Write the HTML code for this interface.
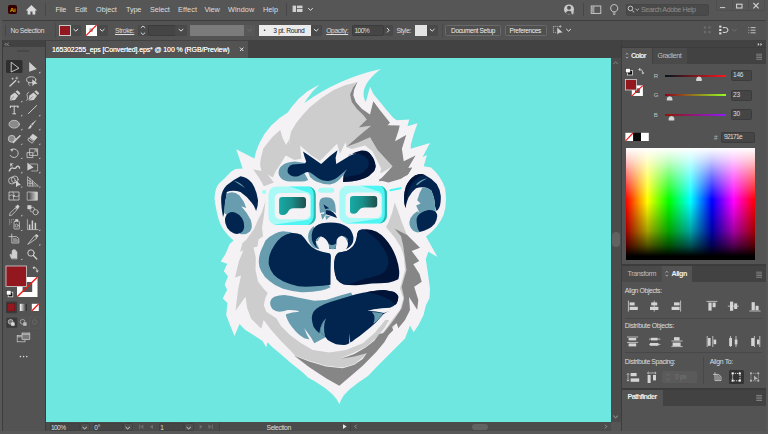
<!DOCTYPE html>
<html><head><meta charset="utf-8"><title>Illustrator</title>
<style>
*{box-sizing:border-box;margin:0;padding:0}
html,body{width:768px;height:434px;overflow:hidden;background:#585858;font-family:"Liberation Sans",sans-serif;color:#dcdcdc;font-size:7.5px}
.a{position:absolute}
.t{position:absolute;white-space:nowrap;line-height:10px;height:10px;color:#dedede;font-size:7.5px}
.b{font-weight:bold}
.u{text-decoration:underline}
.f{position:absolute;background:#454545;border:1px solid #3b3b3b;border-radius:1.5px}
.dim{color:#8c8c8c}
#ov{position:absolute;left:0;top:0;width:768px;height:434px;pointer-events:none}
</style></head><body>
<!-- app frame -->
<div class="a" style="left:0;top:0;width:768px;height:20px;background:#565656"></div>
<div class="a" style="left:2px;top:20px;width:764px;height:411px;background:#535353"></div>
<!-- menubar separator -->
<div class="a" style="left:2px;top:19.5px;width:764px;height:1.2px;background:#3d3d3d"></div>
<div class="a" style="left:2px;top:39.8px;width:764px;height:1px;background:#404040"></div>
<!-- toolbar -->
<div class="a" style="left:2px;top:40px;width:44px;height:391px;background:#3c3c3c"></div>
<div class="a" style="left:3px;top:40.3px;width:41.5px;height:390.7px;background:#535353"></div>
<div class="a" style="left:3px;top:40.3px;width:41.5px;height:7.2px;background:#424242"></div>
<div class="a" style="left:17px;top:50px;width:12px;height:2px;background:#484848"></div>
<!-- tab bar -->
<div class="a" style="left:46px;top:40.3px;width:575px;height:17.7px;background:#424242"></div>
<div class="a" style="left:46px;top:40.8px;width:201.5px;height:17.2px;background:#535353"></div>
<!-- canvas -->
<div class="a" id="canvas" style="left:46px;top:58px;width:565px;height:364px;background:#6ee7e0;overflow:hidden">
<svg class="a" style="left:-46px;top:-58px" width="768" height="434" viewBox="0 0 768 434">
<defs>
<linearGradient id="lens" x1="0" y1="0" x2="1" y2="0"><stop offset="0" stop-color="#17aaa5"/><stop offset="0.45" stop-color="#19908b"/><stop offset="1" stop-color="#1f4f4c"/></linearGradient>
</defs>
<!-- silhouette -->
<path id="sil" fill="#f4f2f5" d="M380.8,69 C370,77 358.5,90 365.8,102 L370,86.7 L373.3,93.7 L380,102 L386.7,110.3 L393.3,117.8 L396.7,120.3 L409.2,119.5 L407.5,126.2 L417.5,123.3 L413.5,135 L411,144 L410.6,148.7 L430,143.1 L422.5,156.9 L426.9,155 L423.7,166.2
 L431,167.5 Q441,176 445,188 Q447.5,204 443.5,215 Q438,228 426,236.5 L437.5,257 L428.3,251.8 L425.8,259.3 L428.3,276 L430,289.3 L429.5,298 L426,305 L423.5,315 L418.5,325 L413.7,332.3 L410,325.5 L405,338.5 L392.5,351 L380,363.5 L368,376 L358,382.7 L349.7,389.3 L343.8,395.2 L340.9,400.2 L339.5,404.3
 L336.7,399.3 L332.2,393.9 L324.7,387.7 L316.3,382.2 L308,377.6 L302.5,372.2 L290,362.2 L280,353.5 L272.5,347.2 L267.5,342.2 L266.2,347.2 L262.5,341 L255,336 L245,329.7 L239.5,324 L234.5,336 L230,325 L226.2,315 L227.5,303 L222.7,298.5 L227.2,289.7 L224.7,284.7 L228,276.3 L223.8,271.3 L227.2,263.8 L220.7,261.5 L225.5,254 L229.7,244 L233.7,240.5
 Q222,231 218.5,219 Q215,205 214.5,198 Q215,188 219,183.5 L224.7,178.2 L231.3,171.5 L235.5,169 L242.6,168.6 L239.5,158.7 L236.2,149.3 L254.4,158.6 L256,151.7 L259.3,143.3 L264.3,134.2 L271,125.8 L279.3,118.3 L287.7,112.5 L287.5,113 L291.2,107.5 L298.7,98.7 L307.5,91.2 L319.5,84.5 L313,91 L308,97.5 L304,103.3 Q337.6,78.6 380.8,69 Z"/>

<!-- light gray islands -->
<g fill="#cdcdcd">
<path d="M357.5,82 L345,85.3 L333.3,90.3 L321.7,97.8 L310,107 L302.7,115 L296,123.3 L291,131.7 L289.3,140 L290.7,147 L288.9,140 L286,145 L282.7,138.3 L280.2,130 L272.7,136.7 L266,145 L263.2,148.7 L260.7,158.7 L260.1,165 L261.4,171 L253.2,169.4 L258.9,177.5 L263.9,186.2 L273.9,182.5 L267.6,174.6 L272.8,177.5 L275.7,171.2 L280.7,163.7 L285.7,155.6 L294.5,160 L301.4,158.7 L300.1,145.6 L311.2,155.2 L320,160.9 L337,143.7 L340,154 L345.6,142 L346.5,146.8 L358.7,136 L371,125.8 L358.5,127.5 L366.7,119.5 L363.3,115.3 L356.7,108.7 L351.7,102 L350,94.5 L353.3,87 Z"/>

<path d="M345.5,147 L358,141.5 L370,136.9 L377.5,150 L392.5,166.2 L382.5,172.5 L380,173.1 L381.2,168.7 L377.5,161.2 L372.5,151.2 L365,145.6 L352,149 Z"/>
<path d="M265.5,201 L262,212 L257,222 L254,229 L246.3,239.7 L242.5,243 L240,252 L243.5,250 L239,261 L235,277.5 L241,275.5 L238,290 L235.5,310.8 L245.5,296.7 L247.2,308.3 L251.2,318.7 L261.2,328.7 L263.7,320 L271.2,330 L281.2,341.2 L290,350 L295.2,355.8 L309.3,360.8 L326,365.8 L342.7,367.5 L354.3,364.2 L362.7,357.5 L366.8,353.3 L354.3,355.8 L341,358.3 L354.3,352.5 L366,346.7 L376,338.3 L384.3,328.3 L389.3,320 L385.2,320 L382.7,323.3 L374.3,333.3 L362.7,343.3 L346,350 L329.3,352.5 L312.7,350 L300,342.5 L290,335 L281.2,326.2 L276.3,318.3 L266.3,311.7 L263.8,305 L265.5,297.5 L267.7,293 L263,288 L258,281.5 L255.5,270 L255.8,257.5 L253.5,247.6 L257.5,246.5 L258.5,239.5 L263,236.3 L262,228 L264,215 Z"/>
<path d="M394.7,202.5 L392.2,212.5 L388.5,222.5 L386,227 L394.7,237.5 L401,247.5 L404,257 L405,270 L400,288.3 L403.3,298.3 L400,310 L392,320 L385,330 L378,338 L372,343 L380,345 L392,330 L402,312 L408,298 L406,280 L408,262 L407,235 L402.9,225 L401,220 L398.5,212.5 Z"/>
<path d="M388.3,227.7 L396,238 L405,251 L410,248 L400,231 Z"/>
</g>
<!-- dark gray -->
<g fill="#868686">
<path d="M357.5,82 L353.3,87 L350,94.5 L351.7,102 L356.7,108.7 L363.3,115.3 L366.7,119.5 L358.5,127.5 L371,125.8 L358.7,136 L346.5,146.8 L358,142.5 L370,137.2 L377.5,150 L392.5,166.2 L378.7,181.2 L396.2,180 L407.5,175 L411.9,167.5 L408.1,168.1 L415.6,155.6 L403.7,161.2 L401.9,148.7 L406.2,135 L395,141.2 L398.7,130 L399.7,125.5 L387.5,125.3 L390,122.8 L380,110.3 L373.3,101.2 L370,114.5 L361.7,108.7 L355.8,102 L353.3,95.3 L354.2,89.5 Z"/>

<path d="M294.3,355.7 L309.3,367.3 L326,378.2 L339.3,385.7 L349.3,377.3 L362.7,365.7 L376,352.3 L384.3,342.3 L388.5,335 L393.3,330 L391.7,326.7 L396.7,323.3 L398.3,328.3 L405,320 L410,310 L409,297 L417.2,309.7 L418.3,300 L414.2,286.7 L421.7,281.7 L419.5,274 L413.3,264.3 L419.2,261 L411.7,251 L420,247.7 L407.2,235 L394.7,228.7 L401,236.2 L403.3,246 L405,259.3 L406.5,270 L401.7,286.7 L404.2,298.3 L401.7,308.3 L395,318.3 L390,325 L383.5,333 L379.3,334 L374.3,340.7 L366,347.3 L354.3,354 L341,358.7 L354.3,356.5 L366.8,353.2 L362.7,359 L354.3,364.8 L342.7,368.2 L326,366.5 L309.3,361.5 Z"/>
<path d="M378.5,180 L388.5,182.5 L401,178.7 L408.5,173.7 L412.2,167.5 L407.2,169.4 L411,162 L400,170 L385,176 Z"/>
</g>

<!-- LEFT EAR -->
<path fill="#02254f" d="M226.7,185.2 Q233,180 240.5,176.3 Q247,177 252,183 Q256.5,190 258,200 Q258.2,206 256.1,211 Q254,205 251.7,202.7 Q247,196.5 240.5,192.1 Q233,189.5 226.7,192 L226.7,194 Q224.5,203 224.3,213 L223,217 Q220.8,205 221.2,197 Q222,190 226.7,185.2 Z"/>
<path fill="#689db0" d="M226.7,193.8 Q233,190 239.3,195.3 Q244.5,201.5 246.2,208 L241.2,206.3 Q247.5,213 250.8,220 Q253.2,228 250,231.5 Q246,235.3 240,234 L228,216 L224.2,212.7 Q224.4,203 226.7,193.8 Z"/>
<ellipse fill="#02254f" cx="234.6" cy="223" rx="8.8" ry="11.6" transform="rotate(-32 234.6 223)"/>
<path fill="#689db0" d="M233.8,180.7 Q240.5,182 245,188 Q239.5,184.5 233.8,180.7 Z"/>
<!-- RIGHT EAR -->
<path fill="#02254f" d="M405.4,208.1 Q402.5,197 406,186.2 Q409,179.5 415,175.5 Q419.7,173 424,174.5 Q431,178 436.7,183.9 Q440,189 440.8,196 Q441,203 439.5,207 Q438.5,209.5 436.7,211 Q435.5,209 435,206 Q435,199 431.3,190.4 Q427,187 422.6,187.3 Q419,187.2 416.1,188.2 Q411,192 408.5,197.5 Q406.5,202 405.4,208.1 Z"/>
<path fill="#011438" d="M405.4,208.1 Q402.5,197 406,186.2 Q409,179.5 415,175.5 Q419.7,173 424,174.5 Q414.5,178 410,187 Q406.5,196 405.4,208.1 Z"/>
<path fill="#689db0" d="M416.1,184.2 Q421,179.5 427.3,178.3 Q421.5,181.5 417,185.2 Z"/>
<path fill="#689db0" d="M422.6,187.3 Q427,187 431.3,190.4 Q435,199 435,206 L436,213 L420,214 L416.1,205.6 L420.6,203.4 L417.2,200.3 Q419,193 422.6,187.3 Z"/>
<path fill="#689db0" d="M417.3,211.2 Q412.5,214 410.5,218 Q409,221.5 409.6,225 Q410.5,228.5 413,230.5 Q415.5,232.5 418.5,232.6 L422,230 L420,213 Z"/>
<path fill="#02254f" d="M416.6,218.7 Q417.5,215.5 419.7,213.7 Q424,210.5 428.5,210 Q432,209.8 434.7,211.2 Q437.5,213 437.2,216.2 Q437,220 434.7,223.7 Q432,227 428.5,228.7 Q424,231 419.7,231.9 Q417.5,229.5 417.2,226.2 Q416.3,222 416.6,218.7 Z"/>
<!-- BROW -->
<path fill="#689db0" d="M278.5,172.5 Q279,167 282.5,165.2 Q286,162 295,161.5 L305,163 L310,177 Q313,180 316.2,181.5 Q323,184.5 330,184.6 Q335.5,183.5 340,179 L345,172.7 L346.9,169 L340,165 L300,165 L308.2,180 Q305,181.5 301.2,181.5 L290,181.5 Q284,181.3 280.7,178 Q278.3,175.5 278.5,172.5 Z"/>
<path fill="#02254f" d="M303.1,151.5 L311.2,157.1 L321.2,164 L330,155.9 L337.5,150.2 L335.6,157.7 L336.2,164 L341.2,160.9 Q350,155 360,151.5 Q368,150 371,155 Q375,160 375.6,166.2 Q375,171 372.5,172.5 Q369,176.5 365,178.1 Q358,181 352.5,181.2 L343.1,181.9 L343.7,175 Q345,171.5 346.9,169.2 Q343,172.5 340,175.2 Q337.5,177.5 335,179 Q332,180.5 328.7,180.9 Q325,181 322.5,180.2 Q320,179.5 317.5,177.7 L312.5,174 Q310,172.3 307.5,172.1 Q305.5,172.3 303.7,173.4 L298.7,175.9 Q296,176.8 293.7,176.5 Q291,176 289.4,174.6 Q287.5,173 287.5,170.9 Q287.6,168.5 288.7,167.1 Q290,165.3 292.5,164.6 L298.7,164 L305,163.4 L306.2,161.5 L304.4,156.5 Z"/>
<path fill="#011438" d="M343.1,181.9 L343.7,175 Q344.3,173 345,177.7 Q348,176.5 351.2,175.9 Q356,175.5 360,174 Q364,172.5 367.5,168 Q369.5,165 368.5,161 Q366,155.5 358.7,153.7 Q353,153 347.5,155.5 L350,155 Q355,151.8 361.2,150.6 Q368,150 371,155 Q375,160 375.6,166.2 Q375,171 372.5,172.5 Q369,176.5 365,178.1 Q358,181 352.5,181.2 Z"/>
<!-- NOSE BRIDGE -->
<path fill="#689db0" d="M319.5,207.5 Q318.3,200 322,198 Q326,196.5 330,197.8 Q334.5,199.5 335.3,205 L336,213 L331,210.5 L327,213 L322.5,219.3 L324.5,212 L320,213 Z"/>
<path fill="#02254f" d="M323.4,204.2 L329.2,208.3 L325.2,209 Z M325.8,210.4 Q333.5,209.3 337,218 Q331.5,215.6 326,214.2 Z"/><path fill="#689db0" d="M321,214 L326,213.5 L322.2,219.8 Z M325.5,215.5 L330.5,216 L326,220 Z"/>
<!-- NOSE -->
<path fill="#689db0" d="M314,226 Q308.3,230 308,237 Q308.5,243.5 314,247.8 L319.5,249.3 L314,238 Z"/>
<path fill="#02254f" d="M312.5,231 Q314,225.5 322,223.3 Q331.2,221.5 340,223.5 Q348.5,226 351.2,231 Q354.5,237 353,242 Q351.5,246.5 346,249.2 Q349,245 347.5,241.5 Q345.5,236.5 341.9,235.7 Q338.5,236.2 336.7,240 L336.2,245 L335.5,248.9 L329.5,248.9 L328.7,243.9 Q326.5,238 321.2,236.4 Q317,237 315.6,241.4 Q315.5,245.5 318.7,249.2 Q313.5,246 311.9,240 Q311,235 312.5,231 Z"/>
<path fill="#689db0" d="M328.7,243.5 Q331,246.5 336.3,243.5 L335.6,248 Q332.5,250.5 329.3,248 Z M315.7,241.2 Q316.5,237 321.2,236.4 Q318.5,238 317.8,241 Z M347.5,241.8 Q346.5,237.5 342,235.8 Q345.5,236 347.8,239 Z"/>
<!-- LEFT CHEEK -->
<path fill="#689db0" d="M265.5,240.5 Q270,236 274.7,233.8 Q279,231.5 283,231.3 L291.3,232.2 L300,240 L330.5,287.2 Q326,289.5 321.3,290.5 Q311,292.5 301.3,292.2 Q292,291.5 283,288.8 Q275,286 269.7,281.3 Q264,277 261.3,271.3 Q258.5,266 258.8,261.3 Q259,255 261.3,249.7 Z"/>
<path fill="#02254f" d="M281.3,237.2 Q286,234 291.3,233 Q296.5,232.5 301.3,234.7 Q305,238 308,243 Q311.5,247.5 316.3,249.7 Q322,252 328,253 L330,253.5 Q331,255 330.9,257 L330.6,269.5 L330.5,284.7 Q323,286 314.7,286.3 Q306,287 298,286.3 Q290,284.5 283,281.3 Q277.5,278.5 273.8,274.7 Q270,270 268.8,264.7 Q268.3,259.5 269.7,254.7 Q271.5,249.5 274.7,244.7 Q277.5,240.5 281.3,237.2 Z"/>
<!-- RIGHT CHEEK -->
<path fill="#011438" d="M358.3,231 Q362,229 366.7,229.3 Q372,229.5 376.7,231.8 Q381.5,234.5 385,238.5 Q389,243 391.7,247.7 Q395,253.5 396.7,259.3 Q398.7,265 399.2,271 Q399.5,276 398.3,279.3 Q394,281.5 388.3,282.7 Q380,283.5 371.7,283.5 Q364,284.5 356.7,285.2 Q350,285.5 343.3,284.3 Q339,282.5 336.7,279.3 Q334.5,274 334.2,267.7 Q334,262 335,257.7 Q336,254.5 338.3,252.7 L346.7,251 Q350.5,249 353.3,246 Q356,242 356.7,237.7 Q357,233.5 358.3,231 Z"/>
<path fill="#02254f" d="M358.3,231 Q360,229.5 363.3,229.3 Q371,234 378.3,241 Q383.5,247.5 386.7,254.3 Q389,259.5 388.3,264.3 Q387,269.5 383.3,272.7 Q379,275.5 373.3,276.8 L363.3,279.3 Q356,281.5 349,284.8 Q346,284.8 343.3,284.3 Q339,282.5 336.7,279.3 Q334.5,274 334.2,267.7 Q334,262 335,257.7 Q336,254.5 338.3,252.7 L346.7,251 Q350.5,249 353.3,246 Q356,242 356.7,237.7 Q357,233.5 358.3,231 Z"/>
<!-- CHIN -->
<path fill="#689db0" d="M270.2,301.7 Q271,298 274.3,296.7 Q279,295 284.3,295 Q291,295.8 297.7,297.5 L314.3,300.8 L326,300 L339.3,295.8 L351,292.4 L353,296 L330,318 L326,337 L314.3,343.3 L311,337.5 L304.3,328.3 Q306,334 309.5,339.5 Q306,338.8 304.3,338.3 Q299.5,335.5 296,331.7 Q292,327.5 289.3,323.3 Q287,319.5 286,315.8 L286,314.2 Q292,312 299.3,311.7 L297.7,310.8 Q292.5,309.7 287.7,310 Q283,311.5 279.3,311.7 Q275.5,311.2 272.7,309.2 Q269.8,306 270.2,301.7 Z"/>
<path fill="#02254f" d="M313.5,311.7 Q316,308.5 319.3,306.7 Q325,303.5 331,301.7 L342.7,298.3 L356,294.2 Q363,292.5 369.3,291.7 Q377,290.3 384,290 L393.3,291.7 Q397.5,293.5 398.3,296.7 Q398.3,300.5 396.7,303.3 Q394,306.5 390,307.7 L381.7,308.3 Q374,308.8 367.5,310.8 Q376,309 390,310 L383.3,314.2 L376.7,321.7 Q371,327 365,331.7 Q360,336 355,339.2 Q352.5,341.5 350.2,342.5 L349.3,333.3 L349.3,343.3 Q347,344.8 344.3,345 Q340,345 336,344.2 Q331.5,342.5 327.7,340 L325.2,336.7 Q322.5,334.5 320.2,331.7 Q321,324.5 326,318.3 Q320.5,323 319.3,333.3 Q316,330.5 313.5,326.7 Q312,322.5 311.8,318.3 Q312,314.5 313.5,311.7 Z"/>
<path fill="#011438" d="M366,292.2 Q377,290.3 384,290 L393.3,291.7 Q397.5,293.5 398.3,296.7 Q398.3,300.5 396.7,303.3 Q396,304.5 395,305 Q393,302 390,300 Q384,296.5 378.3,295 Q372,293.5 366,292.2 Z"/>
<path fill="#f4f2f5" d="M367.5,310.8 Q376,308.7 390,308.8 L391,310.5 L384,313 Q376,311 367.5,310.8 Z"/><path fill="#689db0" d="M372,312 Q378,312 383.3,313.5 L376.7,321.5 L373.3,323.5 Q376.5,317 372,312 Z"/><path fill="#689db0" d="M326,318.3 Q321,324.5 320.2,331.7 L325.2,336.7 Q322.5,327 326,318.3 Z"/>

<!-- GLASSES -->
<clipPath id="cl"><rect x="268.5" y="186.5" width="47.2" height="38.4" rx="8" ry="8"/></clipPath>
<clipPath id="cr"><rect x="339.4" y="185.7" width="47.5" height="37.9" rx="8" ry="8"/></clipPath>
<g clip-path="url(#cl)">
<rect x="268" y="186" width="48" height="40" fill="#a9faf6"/>
<path fill="#4ef5f3" d="M288,186 L316,186 L316,225 L271,225 L308.5,219.8 Q311,218.5 311,214.5 L311,198 Q311,194 308.5,192.4 Z"/>
<path fill="#2eb6b1" d="M308,186 Q313.8,187.5 313.7,196 L313.7,215.5 Q313.6,221.5 308,225 L317,225 L317,186 Z"/>
</g>
<rect x="274.7" y="193" width="35.3" height="26.2" rx="5.5" ry="5.5" fill="#f4f2f5"/>
<path fill="url(#lens)" d="M282.3,197 H303 Q306,197 306,200 V205.3 Q306,208.2 303,208.2 H293.5 Q290,208.2 288.5,211 Q286.5,215 283.2,215 H282.3 Q279.1,215 279.1,212 V200 Q279.1,197 282.3,197 Z"/>
<g clip-path="url(#cr)">
<rect x="339" y="185" width="48" height="40" fill="#a9faf6"/>
<path fill="#4ef5f3" d="M359,185 L387.5,185 L387.5,224.2 L342,224.2 L379.7,218.6 Q382.2,217.3 382.2,213.3 L382.2,197.4 Q382.2,193.4 379.7,191.8 Z"/>
<path fill="#2eb6b1" d="M379,185 Q384.9,186.5 384.8,195 L384.8,214.5 Q384.7,220.5 379,224 L388,224 L388,185 Z"/>
</g>
<rect x="345.6" y="192.4" width="35.6" height="25.6" rx="5.5" ry="5.5" fill="#f4f2f5"/>
<path fill="url(#lens)" d="M353.2,196.1 H374.2 Q377.2,196.1 377.2,199.1 V204.5 Q377.2,207.4 374.2,207.4 H364 Q360.5,207.4 359,210 Q357,213.7 354,213.7 H353.2 Q350,213.7 350,210.7 V199.1 Q350,196.1 353.2,196.1 Z"/>
<rect x="318.2" y="187.7" width="16" height="5" rx="2.5" fill="#a9faf6"/>
<circle cx="264.2" cy="191.9" r="2.2" fill="#a9faf6"/>
<path d="M390.3,190.3 L400.6,188.2" stroke="#4ef5f3" stroke-width="2" stroke-linecap="round"/>
</svg>
</div>
<!-- v scroll -->
<div class="a" style="left:611px;top:58px;width:10px;height:364px;background:#4b4b4b"></div>
<div class="a" style="left:611.5px;top:232px;width:8.5px;height:15px;background:#626262;border-radius:4px"></div>
<!-- status bar -->
<div class="a" style="left:46px;top:422px;width:575px;height:9px;background:#4b4b4b"></div>
<div class="a" style="left:611px;top:422px;width:10px;height:9px;background:#555"></div>
<div class="a" style="left:472px;top:423.5px;width:16px;height:6.5px;background:#626262;border-radius:3px"></div>
<div class="f" style="left:49.5px;top:423px;width:30.5px;height:8px;border-color:#404040"></div>
<div class="f" style="left:80px;top:423px;width:9.5px;height:8px;border-color:#404040;background:#4e4e4e"></div>
<div class="f" style="left:92.5px;top:423px;width:30.5px;height:8px;border-color:#404040"></div>
<div class="f" style="left:123px;top:423px;width:9.5px;height:8px;border-color:#404040;background:#4e4e4e"></div>
<div class="f" style="left:158.5px;top:423px;width:25.5px;height:8px;border-color:#404040"></div>
<div class="f" style="left:184px;top:423px;width:9.5px;height:8px;border-color:#404040;background:#4e4e4e"></div>
<div class="a" style="left:218.5px;top:423px;width:1px;height:8px;background:#404040"></div>
<div class="a" style="left:349.5px;top:423px;width:1px;height:8px;background:#404040"></div>
<!-- dock -->
<div class="a" style="left:620.5px;top:40px;width:145.5px;height:391px;background:#3c3c3c"></div>
<div class="a" style="left:622px;top:40.3px;width:143.5px;height:7.2px;background:#424242"></div>
<div class="a" style="left:622px;top:47.5px;width:143.5px;height:16.5px;background:#424242"></div>
<div class="a" style="left:622px;top:47.5px;width:30px;height:17px;background:#535353"></div>
<div class="a" style="left:652.5px;top:48px;width:34.5px;height:15.5px;background:#4a4a4a"></div>
<div class="a" style="left:622px;top:64px;width:143.5px;height:199.5px;background:#535353"></div>
<!-- align -->
<div class="a" style="left:622px;top:265.5px;width:143.5px;height:16.5px;background:#424242"></div>
<div class="a" style="left:622px;top:266px;width:39.5px;height:15.5px;background:#4a4a4a"></div>
<div class="a" style="left:662px;top:265.5px;width:29.5px;height:17px;background:#535353"></div>
<div class="a" style="left:622px;top:282px;width:143.5px;height:106px;background:#535353"></div>
<!-- pathfinder -->
<div class="a" style="left:622px;top:389.5px;width:143.5px;height:16.5px;background:#424242"></div>
<div class="a" style="left:622px;top:389.5px;width:41px;height:17px;background:#535353"></div>
<div class="a" style="left:622px;top:406px;width:143.5px;height:25px;background:#535353"></div>

<!-- color panel contents -->
<div class="a" style="left:665px;top:74.5px;width:61px;height:2px;background:linear-gradient(90deg,#00171e,#ff171e)"></div>
<div class="a" style="left:665px;top:94px;width:61px;height:2px;background:linear-gradient(90deg,#92001e,#92ff1e)"></div>
<div class="a" style="left:665px;top:114px;width:61px;height:2px;background:linear-gradient(90deg,#921700,#9217ff)"></div>
<div class="f" style="left:730.5px;top:70px;width:21px;height:11px"></div>
<div class="f" style="left:730.5px;top:89.5px;width:21px;height:11px"></div>
<div class="f" style="left:730.5px;top:109px;width:21px;height:11px"></div>
<div class="f" style="left:720.5px;top:131.5px;width:34.5px;height:11.5px"></div>
<!-- spectrum -->
<div class="a" style="left:626px;top:148px;width:129px;height:112px;background:linear-gradient(90deg,#f00 0%,#ff0 16.6%,#0f0 33.3%,#0ff 50%,#00f 66.6%,#f0f 83.3%,#f00 100%)"></div>
<div class="a" style="left:626px;top:148px;width:129px;height:112px;background:linear-gradient(180deg,#fff 0%,rgba(255,255,255,.78) 11%,rgba(255,255,255,.45) 25%,rgba(255,255,255,0) 46%,rgba(0,0,0,0) 48%,rgba(0,0,0,.36) 74%,rgba(0,0,0,.68) 87%,#000 96.5%,#000 100%)"></div>

<!-- align panel contents -->
<div class="a" style="left:625px;top:317.7px;width:137px;height:1px;background:#484848"></div>
<div class="a" style="left:625px;top:352.3px;width:137px;height:1px;background:#484848"></div>
<div class="a" style="left:702.6px;top:357px;width:1px;height:27px;background:#484848"></div>
<div class="a" style="left:662px;top:370.5px;width:34.5px;height:12.5px;background:#5a5a5a;border-radius:1.5px"></div>
<div class="a" style="left:729px;top:370px;width:14.5px;height:14px;background:#333;border-radius:1.5px"></div>

<!-- menubar text -->
<div class="a" style="left:45px;top:3px;width:1px;height:13px;background:#474747"></div>
<div class="a" style="left:285.5px;top:3px;width:1px;height:13px;background:#474747"></div>
<div class="a" style="left:583px;top:3px;width:1px;height:13px;background:#474747"></div>
<div class="f" style="left:626px;top:4px;width:82.5px;height:11.5px;border-color:#464646;background:#4a4a4a"></div>
<!-- Ai logo -->
<div class="a" style="left:8px;top:5.2px;width:9.3px;height:9px;background:#300;border-radius:2px"></div>

<!-- control bar -->
<div class="a" style="left:5px;top:25px;width:1px;height:11px;background:#454545"></div>
<div class="a" style="left:54.5px;top:23px;width:1px;height:15px;background:#494949"></div>
<div class="a" style="left:59px;top:24.5px;width:11.5px;height:11.5px;background:#92171e;border:1px solid #c9c9c9"></div>
<div class="f" style="left:70.5px;top:24.5px;width:10.5px;height:11.5px;border-color:#484848;background:#4a4a4a"></div>
<div class="a" style="left:85.5px;top:24.5px;width:11.5px;height:11.5px;background:#fff"></div>
<div class="f" style="left:97px;top:24.5px;width:10.5px;height:11.5px;border-color:#484848;background:#4a4a4a"></div>
<div class="f" style="left:138px;top:24.5px;width:10.5px;height:11.5px;background:#4a4a4a;border-color:#484848"></div>
<div class="f" style="left:148px;top:24.5px;width:27.5px;height:11.5px"></div>
<div class="f" style="left:175px;top:24.5px;width:12px;height:11.5px;background:#4a4a4a;border-color:#484848"></div>
<div class="a" style="left:190px;top:24.5px;width:54px;height:11.5px;background:#7b7b7b"></div>
<div class="a" style="left:244px;top:24.5px;width:11px;height:11.5px;background:#585858"></div>
<div class="a" style="left:259px;top:24.5px;width:52px;height:11.5px;background:#ebebeb"></div>
<div class="f" style="left:311px;top:24.5px;width:10.5px;height:11.5px;border-color:#484848;background:#4a4a4a"></div>
<div class="f" style="left:352px;top:24.5px;width:31.5px;height:11.5px"></div>
<div class="f" style="left:383.5px;top:24.5px;width:9.5px;height:11.5px;background:#4a4a4a;border-color:#484848"></div>
<div class="a" style="left:415px;top:24.5px;width:12px;height:11.5px;background:#e4e4e4"></div>
<div class="f" style="left:427px;top:24.5px;width:10.5px;height:11.5px;border-color:#484848;background:#4a4a4a"></div>
<div class="a" style="left:441.8px;top:23px;width:1px;height:15px;background:#494949"></div>
<div class="f" style="left:445.2px;top:24.5px;width:55.5px;height:11.5px;background:#505050;border-color:#6a6a6a"></div>
<div class="f" style="left:504.5px;top:24.5px;width:42.5px;height:11.5px;background:#505050;border-color:#6a6a6a"></div>

<!-- doc tab -->
<span class="t" style="left:50.9px;top:423.4px;font-size:6.6px;letter-spacing:-0.569px">100%</span>
<span class="t" style="left:94.2px;top:423.4px;font-size:6.6px">0°</span>
<span class="t" style="left:160.3px;top:423.4px;font-size:6.6px">1</span>
<span class="t" style="left:266.5px;top:423.2px;font-size:6.8px;letter-spacing:-0.408px">Selection</span>
<span class="t b" style="left:631.0px;top:50.5px;font-size:7.2px;letter-spacing:-0.833px;color:#f0f0f0">Color</span>
<span class="t" style="left:657.5px;top:50.5px;font-size:7.2px;letter-spacing:-0.460px;color:#bdbdbd">Gradient</span>
<span class="t" style="left:653.8px;top:71.0px;font-size:6.0px;color:#c0c0c0">R</span>
<span class="t" style="left:653.8px;top:90.3px;font-size:6.0px;color:#c0c0c0">G</span>
<span class="t" style="left:653.8px;top:110.2px;font-size:6.0px;color:#c0c0c0">B</span>
<span class="t" style="left:733.0px;top:70.0px;font-size:6.6px;letter-spacing:-0.239px">146</span>
<span class="t" style="left:733.0px;top:89.7px;font-size:6.6px;letter-spacing:-0.172px">23</span>
<span class="t" style="left:733.0px;top:109.3px;font-size:6.6px;letter-spacing:-0.172px">30</span>
<span class="t" style="left:714.0px;top:132.5px;font-size:6.4px;color:#b0b0b0">#</span>
<span class="t" style="left:724.0px;top:132.2px;font-size:6.6px;letter-spacing:-0.653px">92171e</span>
<span class="t" style="left:627.5px;top:268.8px;font-size:7.2px;letter-spacing:-0.443px;color:#bdbdbd">Transform</span>
<span class="t b" style="left:671.5px;top:268.8px;font-size:7.2px;letter-spacing:-0.534px;color:#f0f0f0">Align</span>
<span class="t" style="left:624.7px;top:285.7px;font-size:6.9px;letter-spacing:-0.394px">Align Objects:</span>
<span class="t" style="left:624.7px;top:321.3px;font-size:6.9px;letter-spacing:-0.368px">Distribute Objects:</span>
<span class="t" style="left:624.7px;top:356.8px;font-size:6.9px;letter-spacing:-0.397px">Distribute Spacing:</span>
<span class="t" style="left:709.7px;top:356.8px;font-size:6.9px;letter-spacing:-0.357px">Align To:</span>
<span class="t" style="left:675.0px;top:371.8px;font-size:6.6px;letter-spacing:-0.267px;color:#777">0 px</span>
<span class="t b" style="left:627.5px;top:392.3px;font-size:7.2px;letter-spacing:-0.645px;color:#f0f0f0">Pathfinder</span>
<span class="t" style="left:55.5px;top:4.7px;font-size:7.3px;letter-spacing:-0.341px">File</span>
<span class="t" style="left:75.0px;top:4.7px;font-size:7.3px;letter-spacing:-0.145px">Edit</span>
<span class="t" style="left:96.0px;top:4.7px;font-size:7.3px;letter-spacing:-0.049px">Object</span>
<span class="t" style="left:126.0px;top:4.7px;font-size:7.3px;letter-spacing:-0.132px">Type</span>
<span class="t" style="left:150.0px;top:4.7px;font-size:7.3px;letter-spacing:-0.097px">Select</span>
<span class="t" style="left:178.0px;top:4.7px;font-size:7.3px;letter-spacing:0.078px">Effect</span>
<span class="t" style="left:204.5px;top:4.7px;font-size:7.3px;letter-spacing:-0.122px">View</span>
<span class="t" style="left:228.0px;top:4.7px;font-size:7.3px;letter-spacing:0.058px">Window</span>
<span class="t" style="left:263.0px;top:4.7px;font-size:7.3px;letter-spacing:-0.004px">Help</span>
<span class="t" style="left:641.0px;top:4.7px;font-size:7.2px;letter-spacing:-0.438px;color:#8e8e8e">Search Adobe Help</span>
<span class="t b" style="left:9.7px;top:4.8px;font-size:6.2px;color:#ff9a00;letter-spacing:-0.2px">Ai</span>
<span class="t" style="left:10.5px;top:26.0px;font-size:6.7px;letter-spacing:-0.368px">No Selection</span>
<span class="t u" style="left:115.0px;top:26.0px;font-size:6.7px;letter-spacing:-0.277px">Stroke:</span>
<span class="t" style="left:273.2px;top:26.0px;font-size:6.7px;letter-spacing:-0.303px;color:#222">3 pt. Round</span>
<span class="t u" style="left:326.2px;top:26.0px;font-size:6.7px;letter-spacing:-0.316px">Opacity:</span>
<span class="t" style="left:354.5px;top:25.5px;font-size:6.7px;letter-spacing:-0.627px">100%</span>
<span class="t" style="left:396.5px;top:26.0px;font-size:6.7px;letter-spacing:-0.372px">Style:</span>
<span class="t" style="left:451.0px;top:25.7px;font-size:6.5px;letter-spacing:-0.316px;color:#f0f0f0">Document Setup</span>
<span class="t" style="left:509.5px;top:25.7px;font-size:6.5px;letter-spacing:-0.322px;color:#f0f0f0">Preferences</span>
<span class="t" style="left:52.0px;top:44.7px;font-size:7.0px;letter-spacing:-0.120px;color:#f4f4f4;text-shadow:0 0 0.4px #f4f4f4">165302255_eps [Converted].eps* @ 100 % (RGB/Preview)</span>
<svg id="ov" viewBox="0 0 768 434" fill="none" stroke="none">
<g id="tools" stroke-linejoin="round" stroke-linecap="round">
<!-- row1 -->
<rect x="6" y="60" width="16.5" height="13" rx="1.5" fill="#2f2f2f"/>
<path d="M11.2,62.6 L11.2,72 L18.6,68.4 Z" stroke="#d6d6d6" stroke-width="0.9"/>
<path d="M29.2,62 L29.2,71.8 L36.8,69 Z" fill="#cfcfcf"/>
<path d="M40.3,71.6 L40.3,73.2 L38.7,73.2 Z" fill="#cfcfcf"/>
<!-- row2 wand / lasso -->
<path d="M10,86 L15.8,80.6" stroke="#cfcfcf" stroke-width="1.3"/>
<path d="M16.8,77 v2.2 M15.7,78.1 h2.2 M12.6,78 v1.4 M11.9,78.7 h1.4 M18.6,81.2 v1.4 M17.9,81.9 h1.4" stroke="#cfcfcf" stroke-width="0.7"/>
<ellipse cx="31.2" cy="79.8" rx="4.6" ry="3" stroke="#cfcfcf" stroke-width="0.9"/>
<path d="M28.8,82.3 q-1,2.5 1.2,3.6" stroke="#cfcfcf" stroke-width="0.8"/>
<path d="M32.2,79.2 L32.4,86.2 L34.2,84.2 L37.6,83.4 Z" fill="#cfcfcf"/>
<!-- row3 pen / curvature -->
<path d="M9.8,100.2 L10.6,95.6 L14.8,92.4 L18.2,95.8 L15,100 L10.4,100.6 Z" fill="#cfcfcf"/>
<path d="M15.6,91.6 L17.4,90.2 L20.4,93.2 L19,95 Z" fill="#cfcfcf"/>
<path d="M10.4,100 L13.6,96.8" stroke="#535353" stroke-width="0.6"/>
<path d="M22.3,100.6 L22.3,102.2 L20.7,102.2 Z" fill="#cfcfcf"/>
<path d="M28.6,100.2 L29.4,95.6 L33.6,92.4 L37,95.8 L33.8,100 L29.2,100.6 Z" fill="#cfcfcf"/>
<path d="M34.4,91.6 L36.2,90.2 L39.2,93.2 L37.8,95 Z" fill="#cfcfcf"/>
<path d="M29.2,100 L32.4,96.8" stroke="#535353" stroke-width="0.6"/>
<path d="M28.4,92.2 q-2.6,2.4 -1,4.6 q1.4,2 -0.6,3.6" stroke="#cfcfcf" stroke-width="0.8"/>
<!-- row4 type / line -->
<path d="M10.4,106.2 H18 M14.2,106.2 V113.6 M12.8,113.8 H15.6 M10.4,106.2 V107.6 M18,106.2 V107.6" stroke="#d6d6d6" stroke-width="1"/>
<path d="M22.3,114.6 L22.3,116.2 L20.7,116.2 Z" fill="#cfcfcf"/>
<path d="M28.4,113.6 L36.6,105.6" stroke="#cfcfcf" stroke-width="1"/>
<path d="M40.3,114.6 L40.3,116.2 L38.7,116.2 Z" fill="#cfcfcf"/>
<!-- row5 ellipse / brush -->
<ellipse cx="14.2" cy="124.2" rx="5.2" ry="3.9" fill="#8a8a8a" stroke="#cfcfcf" stroke-width="0.8"/>
<path d="M22.3,128.6 L22.3,130.2 L20.7,130.2 Z" fill="#cfcfcf"/>
<path d="M36.8,119.6 L32.4,125.4 L31,124.2 Z" fill="#cfcfcf"/>
<path d="M30.6,124.8 L32,126 L30.4,128.4 L27.8,128.8 Z" fill="#cfcfcf"/>
<path d="M40.3,128.6 L40.3,130.2 L38.7,130.2 Z" fill="#cfcfcf"/>
<!-- row6 shaper / eraser -->
<circle cx="11.8" cy="138.8" r="3.5" fill="#8a8a8a" stroke="#cfcfcf" stroke-width="0.8"/>
<path d="M13.4,142.4 L20,135.8" stroke="#cfcfcf" stroke-width="1.5"/>
<path d="M22.3,143.2 L22.3,144.8 L20.7,144.8 Z" fill="#cfcfcf"/>
<path d="M32.8,133.8 L37.6,137.2 L34.2,141 L29.4,137.6 Z" fill="#cfcfcf"/>
<path d="M29,138.2 L33.6,141.6 L32.2,143.2 L28.2,140.4 Z" stroke="#cfcfcf" stroke-width="0.8"/>
<path d="M40.3,143.2 L40.3,144.8 L38.7,144.8 Z" fill="#cfcfcf"/>
<!-- row7 rotate / scale -->
<path d="M11.6,149.6 A4.3,4.3 0 1 1 10.2,155.4" stroke="#cfcfcf" stroke-width="0.9"/>
<path d="M10,149.4 L13.4,148.6 L12.2,151.8 Z" fill="#cfcfcf"/>
<path d="M22.3,157.4 L22.3,159 L20.7,159 Z" fill="#cfcfcf"/>
<rect x="27.4" y="152.6" width="5.4" height="5" stroke="#cfcfcf" stroke-width="0.8"/>
<rect x="30" y="148.8" width="7.6" height="6.6" stroke="#cfcfcf" stroke-width="0.8"/>
<path d="M33.4,153 L36.6,149.8 M34.6,149.8 H36.6 V151.8" stroke="#cfcfcf" stroke-width="0.7"/>
<path d="M40.3,157.4 L40.3,159 L38.7,159 Z" fill="#cfcfcf"/>
<!-- row8 width / free transform -->
<path d="M9.4,170.6 q1.6,-3.4 3.4,-2.6 q2.6,1.4 4.2,-1.6 q1.8,-1 2.6,1.8" stroke="#cfcfcf" stroke-width="1.3"/>
<path d="M10.6,164 l2,2 M13,163.6 l-2.6,0.2 l0.4,2.6 M9,171.4 l1.6,-1.6" stroke="#cfcfcf" stroke-width="0.7"/>
<circle cx="11.2" cy="164.6" r="0.9" fill="#cfcfcf"/>
<path d="M22.3,171.6 L22.3,173.2 L20.7,173.2 Z" fill="#cfcfcf"/>
<path d="M27.4,162.6 L27.4,170.6 L33.6,167.6 Z" fill="#cfcfcf"/>
<path d="M30.4,164 H37.6 V171 H31" stroke="#cfcfcf" stroke-width="0.7" stroke-dasharray="1.2 0.9"/>
<path d="M40.3,171.6 L40.3,173.2 L38.7,173.2 Z" fill="#cfcfcf"/>
<!-- row9 shape builder / perspective -->
<circle cx="12" cy="180.6" r="3.4" stroke="#cfcfcf" stroke-width="0.8"/>
<circle cx="14.8" cy="179.4" r="3.4" stroke="#cfcfcf" stroke-width="0.8"/>
<path d="M16,180.6 L16,187.2 L18,185.4 L21,185 Z" fill="#cfcfcf"/>
<path d="M22.3,186 L22.3,187.6 L20.7,187.6 Z" fill="#cfcfcf"/>
<path d="M27.6,177 V186 H38 Z M27.6,180 L32.4,182.6 M27.6,183 L35,184.2 M30,178.6 V186 M32.6,180.6 V186" stroke="#cfcfcf" stroke-width="0.7"/>
<path d="M40.3,186 L40.3,187.6 L38.7,187.6 Z" fill="#cfcfcf"/>
<!-- row10 mesh / gradient -->
<rect x="9.4" y="192" width="9.6" height="8" stroke="#cfcfcf" stroke-width="0.8"/>
<path d="M9.4,195.6 q2.4,-1.8 4.8,0.4 q2.4,1.8 4.8,-0.4 M13,192 q1.6,2 0.6,4 q-0.8,2 0.4,4" stroke="#cfcfcf" stroke-width="0.7"/>
<circle cx="13.8" cy="196" r="0.9" fill="#cfcfcf"/>
<linearGradient id="tg" x1="0" y1="0" x2="1" y2="0"><stop offset="0" stop-color="#3c3c3c"/><stop offset="1" stop-color="#e0e0e0"/></linearGradient>
<rect x="27.6" y="192" width="9.8" height="8.2" fill="url(#tg)" stroke="#cfcfcf" stroke-width="0.7"/>
<!-- row11 eyedropper / blend -->
<path d="M9.6,215.2 L10,213.2 L15,208.2 L16.8,210 L11.8,215 Z" stroke="#cfcfcf" stroke-width="0.8"/>
<path d="M15,207 L17.8,204.6 L19.6,206.4 L17.6,209.6 Z" fill="#cfcfcf"/>
<path d="M22.3,214.6 L22.3,216.2 L20.7,216.2 Z" fill="#cfcfcf"/>
<rect x="27.4" y="205.2" width="4" height="4" fill="#cfcfcf"/>
<circle cx="32.4" cy="209.6" r="2.4" stroke="#cfcfcf" stroke-width="0.7"/>
<circle cx="35.6" cy="212.2" r="2.6" stroke="#cfcfcf" stroke-width="0.8" fill="#535353"/>
<!-- row12 symbol sprayer / graph -->
<rect x="14" y="221.4" width="5.4" height="7.6" rx="0.8" stroke="#cfcfcf" stroke-width="0.8"/>
<rect x="15.2" y="219.2" width="3" height="2" fill="#cfcfcf"/>
<circle cx="16.7" cy="225.6" r="1.5" stroke="#cfcfcf" stroke-width="0.7"/>
<path d="M9.6,220 h0.1 M11.6,220 h0.1 M9.6,222 h0.1 M11.6,222.2 h0.1 M9.6,224 h0.1 M13.2,219.4 h0.1" stroke="#cfcfcf" stroke-width="0.9"/>
<path d="M22.3,229.4 L22.3,231 L20.7,231 Z" fill="#cfcfcf"/>
<path d="M27.4,219.6 V229.6 H38" stroke="#cfcfcf" stroke-width="0.7"/>
<path d="M29.6,229.4 V224.6 M32.4,229.4 V220.4 M35.4,229.4 V222.8" stroke="#cfcfcf" stroke-width="1.5" stroke-linecap="butt"/>
<path d="M40.3,229.4 L40.3,231 L38.7,231 Z" fill="#cfcfcf"/>
<!-- row13 artboard / slice -->
<path d="M11.8,234 V243 H18.8 V238.6 L16.4,236.6 H9" stroke="#cfcfcf" stroke-width="0.8"/>
<path d="M13,238 H16 L18,239.6 V242.2 H13 Z" fill="#8a8a8a"/>
<path d="M28,244 L34.4,236 L37,238 L30,243 Z" stroke="#cfcfcf" stroke-width="0.8"/>
<path d="M34.8,235.6 L36.2,234 L38.6,235.8 L37.4,237.6 Z" fill="#cfcfcf"/>
<path d="M40.3,243.8 L40.3,245.4 L38.7,245.4 Z" fill="#cfcfcf"/>
<!-- row14 hand / zoom -->
<path d="M11.4,258.6 L9.8,254.6 L11,254 L12,255.6 V250.6 h1.2 V254 V249.6 h1.3 V254 V250 h1.3 V254.4 V251.6 h1.2 V256 L17,258.6 Z" fill="#cfcfcf" stroke="#cfcfcf" stroke-width="0.5"/>
<path d="M22.3,258.4 L22.3,260 L20.7,260 Z" fill="#cfcfcf"/>
<circle cx="31" cy="253" r="3.2" stroke="#cfcfcf" stroke-width="1"/>
<path d="M33.4,255.6 L36.8,259" stroke="#cfcfcf" stroke-width="1.4"/>
</g>
<!-- fill / stroke -->
<rect x="17" y="277" width="20.5" height="20" fill="#fff"/>
<rect x="22.6" y="282" width="9.6" height="10" fill="#535353"/>
<path d="M17.2,296.8 L37.3,277.2" stroke="#f01616" stroke-width="1.4"/>
<rect x="6" y="266" width="20.5" height="20.5" fill="#92171e" stroke="#d2d2d2" stroke-width="0.8"/>
<path d="M33.6,267.6 q3.4,-0.4 3.6,3.6" stroke="#cfcfcf" stroke-width="0.9"/>
<path d="M32.4,267.8 L34.4,266 L34.4,269.4 Z M35.6,270.6 L38.8,270.6 L37.2,272.8 Z" fill="#cfcfcf"/>
<rect x="8.2" y="292.2" width="4.6" height="4.6" fill="#111" stroke="#e0e0e0" stroke-width="0.8"/>
<rect x="6.4" y="290.4" width="4.6" height="4.6" fill="#fff" stroke="#222" stroke-width="0.5"/>
<!-- color/gradient/none -->
<rect x="6" y="301.6" width="11" height="11.6" rx="1" fill="#3a3a3a"/>
<rect x="7.8" y="303.8" width="7" height="7.2" fill="#92171e" stroke="#6a1015" stroke-width="0.4"/>
<linearGradient id="tg2" x1="0" y1="0" x2="1" y2="0"><stop offset="0" stop-color="#fff"/><stop offset="1" stop-color="#222"/></linearGradient>
<rect x="19.8" y="303.8" width="7" height="7.2" fill="url(#tg2)"/>
<rect x="31.8" y="303.8" width="7" height="7.2" fill="#fff"/>
<path d="M32,310.8 L38.6,304" stroke="#f01616" stroke-width="1.3"/>
<!-- draw modes -->
<rect x="6" y="317.2" width="11.6" height="11" rx="1" fill="#3a3a3a"/>
<rect x="6" y="317.2" width="35" height="11" rx="1" stroke="#5e5e5e" stroke-width="0.5"/>
<path d="M17.8,317.4 V328 M29.4,317.4 V328" stroke="#5e5e5e" stroke-width="0.5"/>
<circle cx="10.6" cy="321.8" r="2.4" stroke="#cfcfcf" stroke-width="0.7" fill="#777"/>
<rect x="11.2" y="322.4" width="3.4" height="3.4" fill="#e0e0e0"/>
<circle cx="22.6" cy="321.8" r="2.4" stroke="#bdbdbd" stroke-width="0.7"/>
<rect x="23.2" y="322.4" width="3.4" height="3.4" fill="#bdbdbd"/>
<circle cx="34.6" cy="322" r="2.2" stroke="#6e6e6e" stroke-width="0.7"/>
<!-- screen mode -->
<rect x="17.2" y="335.6" width="7.8" height="6.2" stroke="#cfcfcf" stroke-width="0.7"/>
<rect x="22" y="333" width="7.8" height="6.4" fill="#7a7a7a" stroke="#cfcfcf" stroke-width="0.7"/>
<path d="M17.2,336.8 H22 M22,334.2 H29.8" stroke="#cfcfcf" stroke-width="0.8"/>
<!-- dots -->
<circle cx="20.4" cy="356.6" r="0.8" fill="#d6d6d6"/><circle cx="23.6" cy="356.6" r="0.8" fill="#d6d6d6"/><circle cx="26.8" cy="356.6" r="0.8" fill="#d6d6d6"/>
<!-- toolbar collapse -->
<path d="M6.4,43 L5,44.4 L6.4,45.8 M8.6,43 L7.2,44.4 L8.6,45.8" stroke="#bbb" stroke-width="0.7"/>
<path d="M31.4,5 L25.8,10.4 H27.6 V14.6 H30.4 V11.5 H32.5 V14.6 H35.3 V10.4 H37.1 Z" fill="#dadada"/>
<rect x="292.6" y="5.6" width="3.4" height="6.4" fill="#d0d0d0"/><rect x="296.9" y="5.6" width="5.6" height="2.6" fill="#d0d0d0"/><rect x="296.9" y="9" width="5.6" height="3" fill="#d0d0d0"/>
<path d="M308.5,8.5 L310.5,10.3 L312.5,8.5" stroke="#e2e2e2" stroke-width="1.0" stroke-linecap="round" stroke-linejoin="round"/>
<circle cx="569" cy="9.4" r="5" fill="#c9c9c9"/><circle cx="569" cy="7.8" r="2" fill="#535353"/><path d="M565.4,13 q3.6,-4.4 7.2,0 q-3.6,2.6 -7.2,0 Z" fill="#535353"/><path d="M572.6,11.4 v3 M571.1,12.9 h3" stroke="#c9c9c9" stroke-width="0.9"/>
<rect x="591.2" y="6" width="9.6" height="7.4" stroke="#d0d0d0" stroke-width="0.9"/><path d="M593.8,6 V13.4" stroke="#d0d0d0" stroke-width="0.8"/><rect x="592" y="7" width="1.4" height="5.4" fill="#9a9a9a"/>
<path d="M612.8,11.8 q-2.4,-1.6 -2.2,-4 q0.4,-3.2 3.6,-3.4 q3.2,0.2 3.6,3.4 q0.2,2.4 -2.2,4 Z" stroke="#d0d0d0" stroke-width="0.9"/><path d="M612.8,13 h2.8 M613.2,14.4 h2" stroke="#d0d0d0" stroke-width="0.8"/>
<circle cx="630.4" cy="8.4" r="2.3" stroke="#d0d0d0" stroke-width="0.9"/><path d="M632.2,10.4 L634,12.4" stroke="#d0d0d0" stroke-width="1"/>
<path d="M635.7,8.95 L637.2,10.45 L638.7,8.95" stroke="#d0d0d0" stroke-width="0.8" stroke-linecap="round" stroke-linejoin="round"/>
<path d="M716.5,0 V10.5 H764.5 V0 M732.5,0 V10.5 M748.5,0 V10.5" stroke="#4b4b4b" stroke-width="0.7"/>
<path d="M720,7.6 H725.2" stroke="#d0d0d0" stroke-width="1"/><rect x="736.6" y="4.2" width="5.4" height="3.8" stroke="#d0d0d0" stroke-width="1.1"/><path d="M753.4,3 L758.6,8.4 M758.6,3 L753.4,8.4" stroke="#d0d0d0" stroke-width="1.1"/>
<path d="M73.8,29.3 L75.8,31.1 L77.8,29.3" stroke="#e2e2e2" stroke-width="1.0" stroke-linecap="round" stroke-linejoin="round"/>
<path d="M100.2,29.3 L102.2,31.1 L104.2,29.3" stroke="#e2e2e2" stroke-width="1.0" stroke-linecap="round" stroke-linejoin="round"/>
<path d="M179.0,29.3 L181,31.1 L183.0,29.3" stroke="#e2e2e2" stroke-width="1.0" stroke-linecap="round" stroke-linejoin="round"/>
<path d="M314.2,29.3 L316.2,31.1 L318.2,29.3" stroke="#e2e2e2" stroke-width="1.0" stroke-linecap="round" stroke-linejoin="round"/>
<path d="M430.2,29.3 L432.2,31.1 L434.2,29.3" stroke="#e2e2e2" stroke-width="1.0" stroke-linecap="round" stroke-linejoin="round"/>
<path d="M566.6,29.3 L568.6,31.1 L570.6,29.3" stroke="#e2e2e2" stroke-width="1.0" stroke-linecap="round" stroke-linejoin="round"/>
<path d="M247.6,29.3 L249.6,31.1 L251.6,29.3" stroke="#707070" stroke-width="1.0" stroke-linecap="round" stroke-linejoin="round"/>
<path d="M387.2,28.2 L389.2,30.2 L387.2,32.2" stroke="#e2e2e2" stroke-width="1" stroke-linecap="round" stroke-linejoin="round"/>
<path d="M141.1,27.55 L143,26.05 L144.9,27.55" stroke="#e2e2e2" stroke-width="0.9" stroke-linecap="round" stroke-linejoin="round"/>
<path d="M141.1,32.85 L143,34.550000000000004 L144.9,32.85" stroke="#e2e2e2" stroke-width="0.9" stroke-linecap="round" stroke-linejoin="round"/>
<rect x="90" y="29" width="2.6" height="2.6" stroke="#555" stroke-width="0.6"/><path d="M86,35.6 L96.6,25" stroke="#f01616" stroke-width="1.1"/>
<circle cx="264.6" cy="30.2" r="0.8" fill="#222"/>
<path d="M553.4,26.4 H559.4 V28 M553.4,26.4 V32.4 H556" stroke="#d0d0d0" stroke-width="0.7" stroke-dasharray="1.1 0.8"/><path d="M557.2,27.6 L557.4,34.6 L559.2,32.8 L562.6,32.4 Z" fill="#d0d0d0"/><path d="M560.4,25.2 v2.4 M559.2,26.4 h2.4" stroke="#d0d0d0" stroke-width="0.6"/>
<g fill="#6c6c6c"><rect x="703.8" y="26.4" width="2.2" height="2.2"/><rect x="708.4" y="26.4" width="2.2" height="2.2"/><rect x="703.8" y="31" width="2.2" height="2.2"/><rect x="708.4" y="31" width="2.2" height="2.2"/></g>
<g fill="#e2e2e2"><rect x="719.2" y="25.6" width="2.2" height="2"/><rect x="719.2" y="29" width="2.2" height="2"/><rect x="719.2" y="32.4" width="2.2" height="2"/></g><path d="M722.8,27.6 H725.6 q2.4,0.2 2.4,2.4 q0,2.2 -2.4,2.4 H722.8" stroke="#e2e2e2" stroke-width="1"/>
<path d="M732.4,29.3 L734.4,31.1 L736.4,29.3" stroke="#707070" stroke-width="1.0" stroke-linecap="round" stroke-linejoin="round"/>
<path d="M750.6,27.6 H755.6 M750.6,30.2 H755.6 M750.6,32.8 H755.6" stroke="#d0d0d0" stroke-width="0.9"/><path d="M748.4,27.6 h0.8 M748.4,30.2 h0.8 M748.4,32.8 h0.8" stroke="#d0d0d0" stroke-width="0.9"/>
<path d="M240,47.6 L243.4,51 M243.4,47.6 L240,51" stroke="#e6e6e6" stroke-width="1"/>
<path d="M82.9,427.3 L84.7,428.9 L86.5,427.3" stroke="#e2e2e2" stroke-width="0.9" stroke-linecap="round" stroke-linejoin="round"/>
<path d="M125.9,427.3 L127.7,428.9 L129.5,427.3" stroke="#e2e2e2" stroke-width="0.9" stroke-linecap="round" stroke-linejoin="round"/>
<path d="M186.89999999999998,427.3 L188.7,428.9 L190.5,427.3" stroke="#e2e2e2" stroke-width="0.9" stroke-linecap="round" stroke-linejoin="round"/>
<g fill="#6e6e6e"><path d="M143.4,424.6 L140.4,426.8 L143.4,429 Z M139.2,424.6 h1 v4.4 h-1 Z M153,424.6 L150,426.8 L153,429 Z M199.6,424.6 L202.6,426.8 L199.6,429 Z M208.4,424.6 L211.4,426.8 L208.4,429 Z M211.8,424.6 h1 v4.4 h-1 Z"/></g>
<path d="M343,424.2 L346.6,426.6 L343,429 Z" fill="#e6e6e6"/>
<path d="M356.6,424.8 L354.8,426.6 L356.6,428.4" stroke="#9a9a9a" stroke-width="0.9"/><path d="M605,424.8 L606.8,426.6 L605,428.4" stroke="#9a9a9a" stroke-width="0.9"/>
<path d="M613.6,63.599999999999994 L615.6,62.0 L617.6,63.599999999999994" stroke="#8a8a8a" stroke-width="0.9" stroke-linecap="round" stroke-linejoin="round"/>
<path d="M613.6,416.0 L615.6,417.8 L617.6,416.0" stroke="#b0b0b0" stroke-width="0.9" stroke-linecap="round" stroke-linejoin="round"/>
<path d="M757.8,42.8 L759.6,44.4 L757.8,46 Z M760.4,42.8 L762.2,44.4 L760.4,46 Z" fill="#c8c8c8"/>
<path d="M625.8,54.6 L627,53.2 L628.2,54.6 M625.8,56.8 L627,58.2 L628.2,56.8" stroke="#c8c8c8" stroke-width="0.7"/>
<path d="M665.6,272.6 L666.8,271.2 L668,272.6 M665.6,274.8 L666.8,276.2 L668,274.8" stroke="#c8c8c8" stroke-width="0.7"/>
<path d="M756.2,54.2 H762 M756.2,55.900000000000006 H762 M756.2,57.6 H762 M756.2,59.300000000000004 H762" stroke="#8f8f8f" stroke-width="0.8"/>
<path d="M756.2,272.2 H762 M756.2,273.9 H762 M756.2,275.59999999999997 H762 M756.2,277.3 H762" stroke="#8f8f8f" stroke-width="0.8"/>
<path d="M756.2,395.4 H762 M756.2,397.09999999999997 H762 M756.2,398.79999999999995 H762 M756.2,400.5 H762" stroke="#8f8f8f" stroke-width="0.8"/>
<rect x="627.6" y="70.4" width="4.8" height="4.6" fill="#111" stroke="#e0e0e0" stroke-width="0.8"/><rect x="625.6" y="68.4" width="4.6" height="4.4" fill="#fff" stroke="#222" stroke-width="0.5"/>
<path d="M639.4,69.4 q3.2,-0.2 3.4,3.2" stroke="#cfcfcf" stroke-width="0.9"/><path d="M638.2,69.6 L640.2,67.8 L640.2,71.2 Z M641.4,72.4 L644.4,72.4 L642.9,74.6 Z" fill="#cfcfcf"/>
<rect x="631.8" y="85.4" width="11.1" height="10.6" fill="#fff"/><rect x="635" y="88.4" width="4.8" height="4.6" fill="#535353"/><path d="M632,95.8 L642.7,85.6" stroke="#f01616" stroke-width="1.1"/>
<rect x="625.6" y="79.4" width="10.8" height="10.6" fill="#92171e" stroke="#d2d2d2" stroke-width="0.8"/>
<path d="M696.2,81.0 V79.19999999999999 Q696.4,77.0 699,76.6 Q701.6,77.0 701.8,79.19999999999999 V81.0 Z" fill="#d4d4d4"/>
<path d="M666.8000000000001,100.60000000000001 V98.8 Q667.0,96.60000000000001 669.6,96.2 Q672.2,96.60000000000001 672.4,98.8 V100.60000000000001 Z" fill="#d4d4d4"/>
<path d="M668.7,120.4 V118.6 Q668.9,116.4 671.5,116 Q674.1,116.4 674.3,118.6 V120.4 Z" fill="#d4d4d4"/>
<rect x="625.4" y="132.8" width="7.8" height="8.2" fill="#fff"/><path d="M625.6,140.8 L633,133" stroke="#f01616" stroke-width="1.1"/><rect x="633.2" y="132.8" width="7.8" height="8.2" fill="#0a0a0a"/><rect x="641" y="132.8" width="7.8" height="8.2" fill="#fff"/>
<path d="M628.4,300.6 L628.4,311.6" stroke="#d4d4d4" stroke-width="0.8"/>
<rect x="629.6" y="302.4" width="5" height="3" fill="#d4d4d4"/>
<rect x="629.6" y="306.8" width="8.2" height="3.2" fill="#d4d4d4"/>
<path d="M654.2,300.6 L654.2,311.6" stroke="#d4d4d4" stroke-width="0.8"/>
<rect x="651.2" y="302.4" width="6" height="3" fill="#d4d4d4"/>
<rect x="650" y="306.8" width="8.4" height="3.2" fill="#d4d4d4"/>
<path d="M680.6,300.6 L680.6,311.6" stroke="#d4d4d4" stroke-width="0.8"/>
<rect x="674" y="302.4" width="5.6" height="3" fill="#d4d4d4"/>
<rect x="671.6" y="306.8" width="8" height="3.2" fill="#d4d4d4"/>
<path d="M706.4,301.4 L717.4,301.4" stroke="#d4d4d4" stroke-width="0.8"/>
<rect x="708.4" y="302.6" width="3.2" height="8" fill="#d4d4d4"/>
<rect x="712.6" y="302.6" width="3" height="4.6" fill="#d4d4d4"/>
<path d="M727.8,306.2 L738.8,306.2" stroke="#d4d4d4" stroke-width="0.8"/>
<rect x="730" y="301.6" width="3.2" height="9.2" fill="#d4d4d4"/>
<rect x="734.2" y="303.4" width="3" height="5.6" fill="#d4d4d4"/>
<path d="M749.4,311 L760.6,311" stroke="#d4d4d4" stroke-width="0.8"/>
<rect x="751.6" y="302.2" width="3.2" height="8" fill="#d4d4d4"/>
<rect x="755.6" y="305.8" width="3" height="4.4" fill="#d4d4d4"/>
<path d="M627,337 L638.2,337" stroke="#d4d4d4" stroke-width="0.8"/>
<path d="M627,342.4 L638.2,342.4" stroke="#d4d4d4" stroke-width="0.8"/>
<rect x="628.6" y="338" width="7.6" height="2.4" fill="#d4d4d4"/>
<rect x="628.6" y="343.4" width="7.6" height="3" fill="#d4d4d4"/>
<path d="M649,339.1 L660.4,339.1" stroke="#d4d4d4" stroke-width="0.8"/>
<path d="M649,344.4 L660.4,344.4" stroke="#d4d4d4" stroke-width="0.8"/>
<rect x="651" y="337.8" width="6.6" height="2.6" fill="#d4d4d4"/>
<rect x="650" y="343" width="8.4" height="2.8" fill="#d4d4d4"/>
<path d="M671.4,341 L682.6,341" stroke="#d4d4d4" stroke-width="0.8"/>
<path d="M671.4,346.6 L682.6,346.6" stroke="#d4d4d4" stroke-width="0.8"/>
<rect x="674" y="337.2" width="5.6" height="3.2" fill="#d4d4d4"/>
<rect x="672.6" y="342.6" width="8" height="3.4" fill="#d4d4d4"/>
<path d="M707.2,336 L707.2,347" stroke="#d4d4d4" stroke-width="0.8"/>
<path d="M712.8,336 L712.8,347" stroke="#d4d4d4" stroke-width="0.8"/>
<rect x="708" y="338" width="2.6" height="7.8" fill="#d4d4d4"/>
<rect x="713.6" y="339.6" width="2.6" height="4.6" fill="#d4d4d4"/>
<path d="M730.6,336 L730.6,347" stroke="#d4d4d4" stroke-width="0.8"/>
<path d="M736,336 L736,347" stroke="#d4d4d4" stroke-width="0.8"/>
<rect x="729.2" y="338" width="2.8" height="8" fill="#d4d4d4"/>
<rect x="734.8" y="339.6" width="2.6" height="4.8" fill="#d4d4d4"/>
<path d="M754.4,336 L754.4,347" stroke="#d4d4d4" stroke-width="0.8"/>
<path d="M759.8,336 L759.8,347" stroke="#d4d4d4" stroke-width="0.8"/>
<rect x="751.2" y="338" width="2.8" height="8" fill="#d4d4d4"/>
<rect x="757" y="339.6" width="2.4" height="4.8" fill="#d4d4d4"/>
<rect x="630.6" y="373" width="6" height="3.2" fill="#d4d4d4"/>
<rect x="630.6" y="378.4" width="8.6" height="3.4" fill="#d4d4d4"/>
<path d="M628,373.6 V381 M626.8,374.8 L628,373.4 L629.2,374.8 M626.8,379.8 L628,381.2 L629.2,379.8" stroke="#d4d4d4" stroke-width="0.7"/>
<rect x="647.6" y="375" width="3" height="8" fill="#d4d4d4"/>
<rect x="653" y="375" width="3" height="5.4" fill="#d4d4d4"/>
<path d="M647.6,373 H656 M648.8,371.8 L647.4,373 L648.8,374.2 M654.8,371.8 L656.2,373 L654.8,374.2" stroke="#d4d4d4" stroke-width="0.7"/>
<path d="M666.1,375.35 L668,373.85 L669.9,375.35" stroke="#6c6c6c" stroke-width="0.9" stroke-linecap="round" stroke-linejoin="round"/>
<path d="M666.1,378.65 L668,380.34999999999997 L669.9,378.65" stroke="#6c6c6c" stroke-width="0.9" stroke-linecap="round" stroke-linejoin="round"/>
<path d="M715,372.4 V380.6 H721 M713,374.4 H718.4 L721,376.6 V380.6" stroke="#d4d4d4" stroke-width="0.8"/><path d="M715.6,375 H718 L720.4,377 V380 H715.6 Z" fill="#8a8a8a"/>
<rect x="732.6" y="373.4" width="7.4" height="7.4" stroke="#fff" stroke-width="0.8" stroke-dasharray="1.3 0.9"/><g fill="#fff"><rect x="731.6" y="372.4" width="2" height="2"/><rect x="738.8" y="372.4" width="2" height="2"/><rect x="731.6" y="379.6" width="2" height="2"/><rect x="738.8" y="379.6" width="2" height="2"/></g>
<rect x="751" y="373.4" width="7.4" height="7.4" stroke="#b8b8b8" stroke-width="0.7" stroke-dasharray="1.2 0.9"/><g fill="#b8b8b8"><rect x="750" y="372.4" width="1.8" height="1.8"/><rect x="757.4" y="372.4" width="1.8" height="1.8"/><rect x="750" y="379.8" width="1.8" height="1.8"/><rect x="757.4" y="379.8" width="1.8" height="1.8"/></g><path d="M754,375.4 L754.2,380.6 L755.6,379.2 L758,379 Z" fill="#b8b8b8"/>
</svg>
</body></html>
